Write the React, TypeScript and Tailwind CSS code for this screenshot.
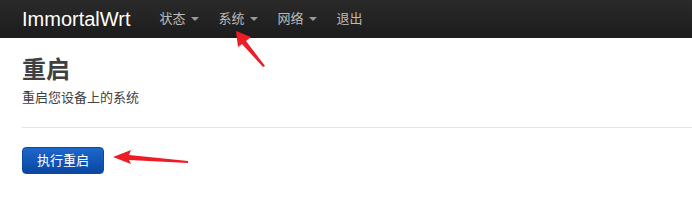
import React from "react";

const navItems = [
  { label: "状态", caret: true },
  { label: "系统", caret: true },
  { label: "网络", caret: true },
  { label: "退出", caret: false },
];

function Caret() {
  return (
    <span className="ml-[5px] inline-block h-0 w-0 border-x-[4px] border-t-[4px] border-x-transparent border-t-[#999] align-middle" />
  );
}

export default function App() {
  return (
    <div
      className="relative h-[206px] w-[692px] overflow-hidden bg-white text-[#404040]"
      style={{ fontFamily: '"Liberation Sans", Arial, "Noto Sans CJK SC", sans-serif' }}
    >
      {/* 顶部导航 */}
      <div className="flex h-[38px] items-center bg-gradient-to-b from-[#2a2a2a] to-[#1c1c1c] pl-[22px]">
        <span className="text-[20px] leading-none text-white">ImmortalWrt</span>
        <div className="ml-[29px] flex items-center gap-[20px]">
          {navItems.map((item) => (
            <span key={item.label} className="flex items-center text-[13px] text-[#bbb]">
              {item.label}
              {item.caret && <Caret />}
            </span>
          ))}
        </div>
      </div>

      {/* 内容 */}
      <div className="pl-[22px]">
        <h2 className="mt-[18px] text-[24px] font-bold leading-[28px] text-[#404040]">重启</h2>
        <p className="mt-[6px] text-[13px] leading-[16px] text-[#404040]">重启您设备上的系统</p>
        <div className="mt-[21px] h-px bg-[#e5e5e5]" />
        <button className="mt-[19px] h-[27px] w-[82px] rounded-[4px] border border-[#0c4aa0] bg-gradient-to-b from-[#1c67cc] to-[#0b47a2] text-[13px] text-white">
          执行重启
        </button>
      </div>

      {/* 标注箭头 */}
      <svg className="pointer-events-none absolute left-0 top-0" width="692" height="206">
        <polygon points="236,31 251,37 246,41 265,66 263,67 242,44 238,47" fill="#ee1c25" />
        <polygon points="113,157 131,150 129,155 188,161 188,163 129,160 131,164" fill="#ee1c25" />
      </svg>
    </div>
  );
}
